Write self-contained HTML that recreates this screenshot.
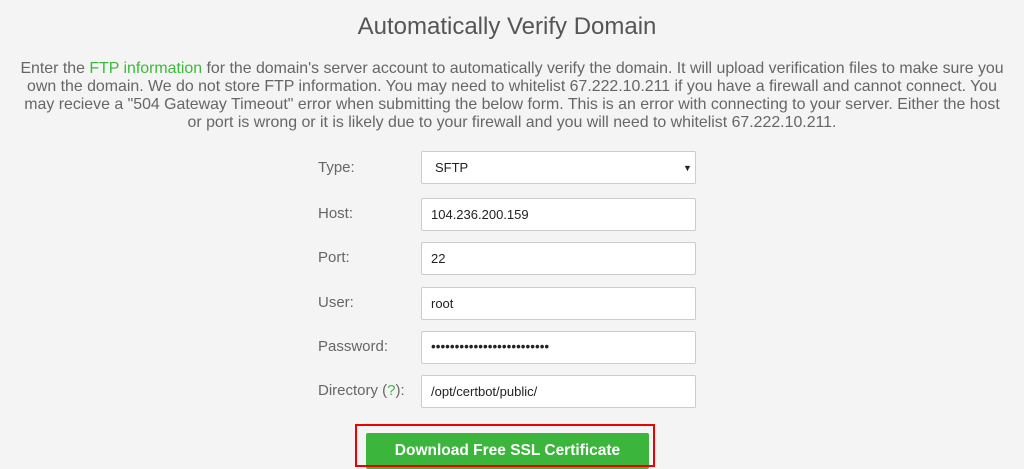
<!DOCTYPE html>
<html><head><style>
body{margin:0;background:#f4f4f4;font-family:"Liberation Sans",Arial,sans-serif;color:#555;width:1024px;height:469px;overflow:hidden;position:relative}
h1{position:absolute;top:13px;left:0;width:1014px;text-align:center;font-weight:normal;font-size:24px;margin:0;color:#555}
p{position:absolute;top:60px;left:16px;width:992px;margin:0;text-align:center;font-size:15.9px;line-height:18px;color:#666}
p span{color:#3cb93c}
.l{position:absolute;left:318px;font-size:15px;color:#666}
.i{position:absolute;left:421px;width:273px;height:31px;background:#fff;border:1px solid #ccc;border-radius:2px;font-size:13px;color:#222;box-sizing:content-box}
.i div{position:absolute;left:9px;top:8px}
.btn{position:absolute;left:366px;top:433px;width:283px;height:36px;background:#3bb53b;color:#fff;font-weight:bold;font-size:15.5px;text-align:center;line-height:36px;border-radius:2px}
.red{position:absolute;left:355px;top:424px;width:296px;height:39px;border:2px solid #e00}
</style></head><body>
<h1>Automatically Verify Domain</h1>
<p>Enter the <span>FTP information</span> for the domain's server account to automatically verify the domain. It will upload verification files to make sure you own the domain. We do not store FTP information. You may need to whitelist 67.222.10.211 if you have a firewall and cannot connect. You may recieve a "504 Gateway Timeout" error when submitting the below form. This is an error with connecting to your server. Either the host or port is wrong or it is likely due to your firewall and you will need to whitelist 67.222.10.211.</p>
<div class="l" style="top:159px">Type:</div><div class="i" style="top:151px"><div style="left:13px">SFTP</div><div style="left:261px;top:11px;font-size:9px">▼</div></div>
<div class="l" style="top:205px">Host:</div><div class="i" style="top:198px"><div>104.236.200.159</div></div>
<div class="l" style="top:249px">Port:</div><div class="i" style="top:242px"><div>22</div></div>
<div class="l" style="top:294px">User:</div><div class="i" style="top:287px"><div>root</div></div>
<div class="l" style="top:338px">Password:</div><div class="i" style="top:331px"><div style="top:7px;letter-spacing:0;font-size:13.5px">•••••••••••••••••••••••••</div></div>
<div class="l" style="top:382px">Directory (<span style="color:#3cb93c">?</span>):</div><div class="i" style="top:375px"><div>/opt/certbot/public/</div></div>
<div class="btn">Download Free SSL Certificate</div>
<div class="red"></div>
</body></html>
